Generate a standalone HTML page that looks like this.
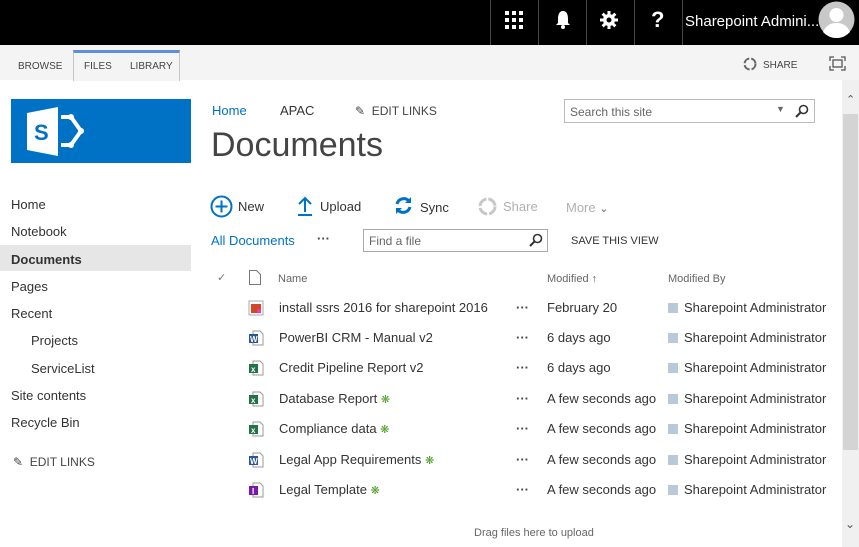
<!DOCTYPE html>
<html><head><style>
*{margin:0;padding:0;box-sizing:border-box}
body{width:859px;height:547px;overflow:hidden;font-family:"Liberation Sans",sans-serif;font-size:13px;color:#333;background:#fff;position:relative}
.a{position:absolute;white-space:nowrap}
#top{position:absolute;left:0;top:0;width:859px;height:45px;background:#000}
.sep{position:absolute;top:0;width:1px;height:45px;background:#444}
#rib{position:absolute;left:0;top:45px;width:859px;height:35px;background:#f4f4f4}
.tab{font-size:10px;color:#444}
.nav{font-size:13px;color:#333}
.row{font-size:13px;color:#333}
.dots{font-size:13px;color:#444;font-weight:bold}
.sq{display:inline-block;width:10px;height:10px;background:#b8c9da;margin-right:6px;vertical-align:-1px}
.ic{position:absolute;width:16px;height:16px}
.star{color:#4a9a1f;font-size:11px}
</style></head><body>
<div id="top">
<div class="sep" style="left:490px"></div><div class="sep" style="left:538px"></div><div class="sep" style="left:586px"></div><div class="sep" style="left:634px"></div><div class="sep" style="left:682px"></div>
<svg class="a" style="left:505px;top:11px" width="18" height="18"><g fill="#fff"><rect x="0" y="0" width="4" height="4"/><rect x="7" y="0" width="4" height="4"/><rect x="14" y="0" width="4" height="4"/><rect x="0" y="7" width="4" height="4"/><rect x="7" y="7" width="4" height="4"/><rect x="14" y="7" width="4" height="4"/><rect x="0" y="14" width="4" height="4"/><rect x="7" y="14" width="4" height="4"/><rect x="14" y="14" width="4" height="4"/></g></svg>
<svg class="a" style="left:555px;top:10px" width="16" height="20"><path d="M8 1C4 1 3 5 3 9v4l-2 2h14l-2-2V9c0-4-1-8-5-8z" fill="#fff"/><circle cx="8" cy="17" r="2" fill="#fff"/></svg>
<svg class="a" style="left:600px;top:11px" width="18" height="18" viewBox="0 0 18 18"><g fill="#fff"><circle cx="9" cy="9" r="6"/><rect x="7.5" y="0" width="3" height="18"/><rect x="0" y="7.5" width="18" height="3"/><rect x="7.5" y="0" width="3" height="18" transform="rotate(45 9 9)"/><rect x="7.5" y="0" width="3" height="18" transform="rotate(-45 9 9)"/></g><circle cx="9" cy="9" r="2.5" fill="#000"/></svg>
<div class="a" style="left:651px;top:7px;color:#fff;font-size:22px;font-weight:bold">?</div>
<div class="a" style="left:685px;top:13px;color:#fff;font-size:15px">Sharepoint Admini...</div>
<svg class="a" style="left:818px;top:1px" width="37" height="37"><circle cx="18.5" cy="18.5" r="18" fill="#c8c8c8"/><circle cx="18.5" cy="14" r="7" fill="#fff"/><path d="M5 31c3-7 8-9 13.5-9S29 24 32 31a18 18 0 0 1-27 0z" fill="#fff"/></svg>
</div>
<div id="rib">
<div class="a tab" style="left:18px;top:16px">BROWSE</div>
<div class="a" style="left:73px;top:5px;width:107px;height:31px;border:1px solid #c6c6c6;border-top:3px solid #5b8fd8;border-bottom:none;background:#f4f4f4"></div>
<div class="a tab" style="left:84px;top:16px">FILES</div>
<div class="a tab" style="left:130px;top:16px">LIBRARY</div>
<svg class="a" style="left:743px;top:12px" width="14" height="14"><circle cx="7" cy="7" r="5.5" fill="none" stroke="#666" stroke-width="2" stroke-dasharray="7 2"/></svg>
<div class="a tab" style="left:763px;top:15px">SHARE</div>
<svg class="a" style="left:829px;top:11px" width="17" height="15"><path d="M1 5V1h4M12 1h4v4M16 10v4h-4M5 14H1v-4" fill="none" stroke="#555" stroke-width="1.3"/><rect x="4" y="4" width="9" height="7" fill="none" stroke="#555" stroke-width="1.3"/></svg>
</div>
<div class="a" style="left:842px;top:80px;width:17px;height:467px;background:#f0f0f0"></div>
<div class="a" style="left:843px;top:114px;width:15px;height:336px;background:#d4d4d4"></div>
<div class="a" style="left:846px;top:93px;color:#555;font-size:11px">&#8963;</div>
<div class="a" style="left:845px;top:517px;color:#555;font-size:12px">&#8964;</div>
<div class="a" style="left:11px;top:99px;width:180px;height:64px;background:#0072c6"></div>
<svg class="a" style="left:26px;top:104px" width="60" height="55"><path d="M1 9L32 3V52L1 46Z" fill="#fff"/><text x="8" y="36" font-family="Liberation Sans" font-weight="bold" font-size="22" fill="#0072c6">S</text><path d="M35 13l10 0 10 14-10 14h-10" fill="none" stroke="#fff" stroke-width="4"/><circle cx="45" cy="13" r="3" fill="#fff"/><circle cx="55" cy="27" r="3" fill="#fff"/><circle cx="45" cy="41" r="3" fill="#fff"/></svg>
<div class="a nav" style="left:11px;top:197px">Home</div>
<div class="a nav" style="left:11px;top:224px">Notebook</div>
<div class="a" style="left:0;top:245px;width:191px;height:26px;background:#e6e6e6"></div>
<div class="a nav" style="left:11px;top:252px;font-weight:bold">Documents</div>
<div class="a nav" style="left:11px;top:279px">Pages</div>
<div class="a nav" style="left:11px;top:306px">Recent</div>
<div class="a nav" style="left:31px;top:333px">Projects</div>
<div class="a nav" style="left:31px;top:361px">ServiceList</div>
<div class="a nav" style="left:11px;top:388px">Site contents</div>
<div class="a nav" style="left:11px;top:415px">Recycle Bin</div>
<div class="a" style="left:13px;top:455px;font-size:12px;color:#444">&#9998;&nbsp; EDIT LINKS</div>
<div class="a" style="left:212px;top:103px;color:#0072c6">Home</div>
<div class="a" style="left:280px;top:103px">APAC</div>
<div class="a" style="left:355px;top:104px;font-size:12px;color:#444">&#9998;&nbsp; EDIT LINKS</div>
<div class="a" style="left:564px;top:99px;width:251px;height:24px;border:1px solid #bbb"></div>
<div class="a" style="left:570px;top:105px;font-size:12px;color:#666">Search this site</div>
<div class="a" style="left:776px;top:104px;font-size:9px;color:#666">&#9660;</div>
<svg class="a" style="left:795px;top:104px" width="14" height="14"><circle cx="8.5" cy="5.5" r="4" fill="none" stroke="#333" stroke-width="1.6"/><path d="M5.5 8.5L1 13" stroke="#333" stroke-width="2"/></svg>
<div class="a" style="left:211px;top:126px;font-size:34px;color:#444">Documents</div>
<svg class="a" style="left:210px;top:195px" width="23" height="23"><circle cx="11.5" cy="11.5" r="10" fill="none" stroke="#0072c6" stroke-width="2"/><path d="M11.5 5.5v12M5.5 11.5h12" stroke="#0072c6" stroke-width="2"/></svg>
<div class="a" style="left:238px;top:199px">New</div>
<svg class="a" style="left:297px;top:196px" width="16" height="20"><path d="M8 2v14M2 8l6-6 6 6M1 19h14" fill="none" stroke="#0072c6" stroke-width="2"/></svg>
<div class="a" style="left:320px;top:199px">Upload</div>
<svg class="a" style="left:394px;top:196px" width="19" height="19"><path d="M3 8a7 7 0 0 1 12-3M16 11a7 7 0 0 1-12 3" fill="none" stroke="#0072c6" stroke-width="3"/><path d="M17 1v6h-6zM2 18v-6h6z" fill="#0072c6"/></svg>
<div class="a" style="left:420px;top:200px">Sync</div>
<svg class="a" style="left:478px;top:197px" width="19" height="19"><circle cx="9.5" cy="9.5" r="7.5" fill="none" stroke="#c8c8c8" stroke-width="3" stroke-dasharray="10 2"/></svg>
<div class="a" style="left:503px;top:199px;color:#b0b0b0">Share</div>
<div class="a" style="left:566px;top:200px;color:#b0b0b0">More <span style="color:#666;font-size:11px">&#8964;</span></div>
<div class="a" style="left:211px;top:233px;color:#0072c6">All Documents</div>
<div class="a dots" style="left:317px;top:231px">&middot;&middot;&middot;</div>
<div class="a" style="left:363px;top:229px;width:185px;height:23px;border:1px solid #aaa"></div>
<div class="a" style="left:369px;top:234px;font-size:12px;color:#666">Find a file</div>
<svg class="a" style="left:529px;top:233px" width="14" height="14"><circle cx="8.5" cy="5.5" r="4" fill="none" stroke="#333" stroke-width="1.6"/><path d="M5.5 8.5L1 13" stroke="#333" stroke-width="2"/></svg>
<div class="a" style="left:571px;top:235px;font-size:11px;color:#333">SAVE THIS VIEW</div>
<div class="a" style="left:217px;top:271px;font-size:11px;color:#777">&#10003;</div>
<svg class="a" style="left:249px;top:270px" width="12" height="15"><path d="M.5.5h7l4 4v10H.5z" fill="none" stroke="#777"/></svg>
<div class="a" style="left:278px;top:273px;font-size:11px;color:#666">Name</div>
<div class="a" style="left:547px;top:273px;font-size:11px;color:#666">Modified &#8593;</div>
<div class="a" style="left:668px;top:273px;font-size:11px;color:#666">Modified By</div>

<svg class="ic" style="left:248px;top:300px"><rect x="1" y="1" width="14" height="14" fill="#fff" stroke="#aaa"/><rect x="3" y="4" width="10" height="9" fill="#d24726"/><circle cx="11" cy="11" r="2" fill="#f3b"/></svg>
<div class="a row" style="left:279px;top:300px">install ssrs 2016 for sharepoint 2016</div>
<svg class="ic" style="left:248px;top:330px"><path d="M5 1h7l3 3v11H5z" fill="#fff" stroke="#999"/><rect x="1" y="4" width="9" height="9" fill="#2b579a"/><text x="2" y="12" font-size="8" fill="#fff" font-weight="bold">W</text></svg>
<div class="a row" style="left:279px;top:330px">PowerBI CRM - Manual v2</div>
<svg class="ic" style="left:248px;top:360px"><path d="M5 1h7l3 3v11H5z" fill="#fff" stroke="#999"/><rect x="1" y="4" width="9" height="9" fill="#217346"/><text x="3" y="12" font-size="8" fill="#fff" font-weight="bold">x</text></svg>
<div class="a row" style="left:279px;top:360px">Credit Pipeline Report v2</div>
<svg class="ic" style="left:248px;top:391px"><path d="M5 1h7l3 3v11H5z" fill="#fff" stroke="#999"/><rect x="1" y="4" width="9" height="9" fill="#217346"/><text x="3" y="12" font-size="8" fill="#fff" font-weight="bold">x</text></svg>
<div class="a row" style="left:279px;top:391px">Database Report <span class="star">&#10059;</span></div>
<svg class="ic" style="left:248px;top:421px"><path d="M5 1h7l3 3v11H5z" fill="#fff" stroke="#999"/><rect x="1" y="4" width="9" height="9" fill="#217346"/><text x="3" y="12" font-size="8" fill="#fff" font-weight="bold">x</text></svg>
<div class="a row" style="left:279px;top:421px">Compliance data <span class="star">&#10059;</span></div>
<svg class="ic" style="left:248px;top:452px"><path d="M5 1h7l3 3v11H5z" fill="#fff" stroke="#999"/><rect x="1" y="4" width="9" height="9" fill="#2b579a"/><text x="2" y="12" font-size="8" fill="#fff" font-weight="bold">W</text></svg>
<div class="a row" style="left:279px;top:452px">Legal App Requirements <span class="star">&#10059;</span></div>
<svg class="ic" style="left:248px;top:482px"><path d="M5 1h7l3 3v11H5z" fill="#fff" stroke="#999"/><rect x="1" y="4" width="9" height="9" fill="#7719aa"/><text x="4" y="12" font-size="8" fill="#fff" font-weight="bold">I</text></svg>
<div class="a row" style="left:279px;top:482px">Legal Template <span class="star">&#10059;</span></div>

<div class="a dots" style="left:516px;top:300px">&middot;&middot;&middot;</div>
<div class="a dots" style="left:516px;top:330px">&middot;&middot;&middot;</div>
<div class="a dots" style="left:516px;top:360px">&middot;&middot;&middot;</div>
<div class="a dots" style="left:516px;top:391px">&middot;&middot;&middot;</div>
<div class="a dots" style="left:516px;top:421px">&middot;&middot;&middot;</div>
<div class="a dots" style="left:516px;top:452px">&middot;&middot;&middot;</div>
<div class="a dots" style="left:516px;top:482px">&middot;&middot;&middot;</div>

<div class="a row" style="left:547px;top:300px">February 20</div>
<div class="a row" style="left:547px;top:330px">6 days ago</div>
<div class="a row" style="left:547px;top:360px">6 days ago</div>
<div class="a row" style="left:547px;top:391px">A few seconds ago</div>
<div class="a row" style="left:547px;top:421px">A few seconds ago</div>
<div class="a row" style="left:547px;top:452px">A few seconds ago</div>
<div class="a row" style="left:547px;top:482px">A few seconds ago</div>

<div class="a row" style="left:668px;top:300px"><span class="sq"></span>Sharepoint Administrator</div>
<div class="a row" style="left:668px;top:330px"><span class="sq"></span>Sharepoint Administrator</div>
<div class="a row" style="left:668px;top:360px"><span class="sq"></span>Sharepoint Administrator</div>
<div class="a row" style="left:668px;top:391px"><span class="sq"></span>Sharepoint Administrator</div>
<div class="a row" style="left:668px;top:421px"><span class="sq"></span>Sharepoint Administrator</div>
<div class="a row" style="left:668px;top:452px"><span class="sq"></span>Sharepoint Administrator</div>
<div class="a row" style="left:668px;top:482px"><span class="sq"></span>Sharepoint Administrator</div>

<div class="a" style="left:474px;top:527px;font-size:11px;color:#666">Drag files here to upload</div>
</body></html>
